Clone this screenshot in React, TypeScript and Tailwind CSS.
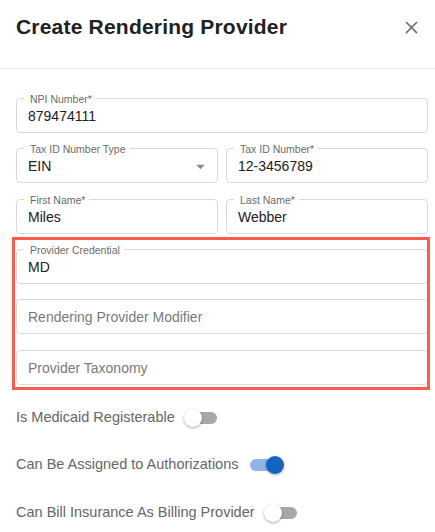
import React from 'react';

const font = { fontFamily: '"Liberation Sans", Arial, Helvetica, sans-serif' };

interface FieldProps {
  label?: string;
  value?: string;
  placeholder?: string;
  select?: boolean;
  className?: string;
}

function Field({ label, value, placeholder, select, className = '' }: FieldProps) {
  return (
    <div className={`relative h-[35px] border border-[#d9d9d9] rounded-[4px] flex items-center justify-between pl-[11px] pr-[6px] ${className}`}>
      {label && (
        <span className="absolute top-0 left-[7px] -translate-y-1/2 bg-white pl-[6px] pr-[4px] text-[10.5px] leading-none text-[#6b6b6b]">
          {label}
        </span>
      )}
      <span className={`pt-[2px] text-[14px] ${value ? 'text-[#212121]' : 'text-[#7a7a7a]'}`}>
        {value || placeholder}
      </span>
      {select && (
        <svg width="21" height="21" viewBox="0 0 24 24" className="mt-[2px]">
          <path d="M7 10l5 5 5-5z" fill="#8a8a8a" />
        </svg>
      )}
    </div>
  );
}

function Toggle({ label, on = false, className = '' }: { label: string; on?: boolean; className?: string }) {
  return (
    <div className={`flex items-center h-[20px] ${className}`}>
      <span className="text-[14.5px] text-[#666666]">{label}</span>
      <div className={`relative ml-[12px] w-[30px] h-[12px] rounded-full ${on ? 'bg-[#90b5e8]' : 'bg-[#a8a8a8]'}`}>
        <div
          className={`absolute top-[-3px] w-[18px] h-[18px] rounded-full shadow-[0_1px_3px_rgba(0,0,0,0.35)] ${
            on ? 'right-[-4px] bg-[#1565c0]' : 'left-[-3px] bg-white'
          }`}
        />
      </div>
    </div>
  );
}

export default function App() {
  return (
    <div className="w-[435px] h-[532px] bg-white overflow-hidden" style={font}>
      <div className="h-[69px] border-b border-[#e6e6e6] flex justify-between items-start pl-4 pr-[13px]">
        <h2 className="pt-[15px] text-[21px] leading-[24px] font-bold tracking-[0.2px] text-[#212121]">Create Rendering Provider</h2>
        <button className="mt-[17px]" aria-label="Close">
          <svg width="21" height="21" viewBox="0 0 24 24">
            <path
              d="M19 6.41 17.59 5 12 10.59 6.41 5 5 6.41 10.59 12 5 17.59 6.41 19 12 13.41 17.59 19 19 17.59 13.41 12z"
              fill="#757575"
            />
          </svg>
        </button>
      </div>

      <div className="pl-4 pr-[7px] pt-[29px]">
        <Field label="NPI Number*" value="879474111" />
        <div className="grid grid-cols-2 gap-[8px] mt-[15px]">
          <Field label="Tax ID Number Type" value="EIN" select />
          <Field label="Tax ID Number*" value="12-3456789" />
        </div>
        <div className="grid grid-cols-2 gap-[8px] mt-[16px]">
          <Field label="First Name*" value="Miles" />
          <Field label="Last Name*" value="Webber" />
        </div>

        <div className="relative mt-[15px]">
          <Field label="Provider Credential" value="MD" />
          <Field placeholder="Rendering Provider Modifier" className="mt-[15px]" />
          <Field placeholder="Provider Taxonomy" className="mt-[16px]" />
          <div className="pointer-events-none absolute top-[-12px] bottom-[-5px] left-[-4px] right-[-2px] border-[3px] border-[#ff5a4f]" />
        </div>

        <Toggle label="Is Medicaid Registerable" className="mt-[23px]" />
        <Toggle label="Can Be Assigned to Authorizations" on className="mt-[27px]" />
        <Toggle label="Can Bill Insurance As Billing Provider" className="mt-[28px]" />
      </div>
    </div>
  );
}
